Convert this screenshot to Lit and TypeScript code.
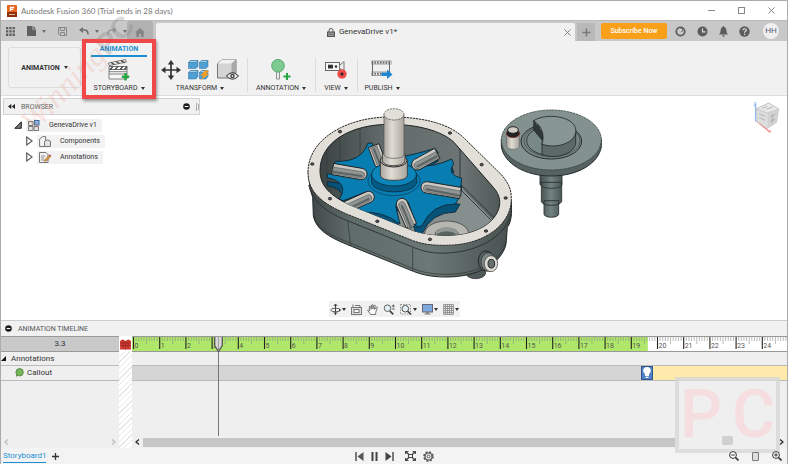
import { LitElement, html, svg, css } from "lit";
import { customElement, property } from "lit/decorators.js";

const STEP = 26.2;
const FRAMES = 25;
const PLAYHEAD = 3.3;
const END = 19.65;

const icon = (w: number, h: number, body: unknown) =>
  html`<svg width=${w} height=${h} viewBox="0 0 ${w} ${h}" aria-hidden="true">${body}</svg>`;

const caret = html`<svg class="caret" width="4" height="3" viewBox="0 0 4 3" aria-hidden="true"><path d="M0 0H4L2 3Z" fill="#333" /></svg>`;

const I = {
  app: icon(10, 12, svg`<rect width="10" height="12" rx="1" fill="#e8641b"/><path d="M0 7h10v5H0z" fill="#8c2f0c"/><path d="M3.4 6V2.5h3.8M3.4 4.3h3" stroke="#fff" stroke-width="1.3" fill="none"/><path d="M2 9.5h6" stroke="#e9b79c" stroke-width="1"/>`),
  min: icon(7, 7, svg`<path d="M0 3.5h7" stroke="#888"/>`),
  max: icon(7, 7, svg`<rect x=".5" y=".5" width="6" height="6" fill="none" stroke="#888"/>`),
  close: icon(7, 7, svg`<path d="M.5 .5l6 6M6.5 .5l-6 6" stroke="#777" stroke-width=".9"/>`),
  grid: icon(9, 9, svg`<path d="M0 0h2.300v2.300H0zM3.300 0h2.300v2.300H3.300zM6.600 0h2.300v2.300H6.600zM0 3.300h2.300v2.300H0zM3.300 3.300h2.300v2.300H3.300zM6.600 3.300h2.300v2.300H6.600zM0 6.600h2.300v2.300H0zM3.300 6.600h2.300v2.300H3.300zM6.600 6.600h2.300v2.300H6.600z" fill="#5c5c5c"/>`),
  file: icon(9, 10, svg`<path d="M0 0h5.500v3.500H9V10H0z" fill="#606060"/><path d="M6.300 0L9 2.700H6.300z" fill="#606060"/>`),
  save: icon(9, 9, svg`<path d="M.5 .5h8v8h-6.500l-1.500-1.500z" fill="none" stroke="#888"/><path d="M2.500 .5v3h4v-3M2.500 8.500v-3h4v3" fill="none" stroke="#888"/>`),
  undo: icon(10, 8, svg`<path d="M1.500 3h4q3.500 0 3.500 4.500" fill="none" stroke="#707070" stroke-width="1.600"/><path d="M0 3L4 0v6z" fill="#707070"/>`),
  redo: icon(10, 8, svg`<path d="M8.500 3h-4q-3.500 0-3.500 4.500" fill="none" stroke="#999" stroke-width="1.400"/><path d="M10 3L6 0v6z" fill="#999"/>`),
  home: icon(10, 9, svg`<path d="M5 0l5 4.500H8.700V9H6V6H4v3H1.300V4.500H0z" fill="#858585"/>`),
  lock: icon(8, 9, svg`<rect x=".5" y="4" width="7" height="4.500" fill="#999" stroke="#555"/><path d="M2 4V2.500a2 2 0 0 1 4 0V4" fill="none" stroke="#555"/><path d="M1 6.200h6" stroke="#555" stroke-width=".6"/>`),
  plusTab: icon(9, 9, svg`<path d="M4.500 .5v8M.5 4.500h8" stroke="#777" stroke-width="1.500"/>`),
  ext: icon(11, 11, svg`<circle cx="5.500" cy="5.500" r="4.200" fill="none" stroke="#5c5c5c" stroke-width="1.800"/><path d="M4 1.500l4 1.500-1.500 3" fill="#ddd" stroke="#5c5c5c"/>`),
  clock: icon(11, 11, svg`<circle cx="5.500" cy="5.500" r="5" fill="#5c5c5c"/><path d="M5.500 2.500v3.300h3" fill="none" stroke="#ddd" stroke-width="1.200"/>`),
  bell: icon(9, 11, svg`<path d="M4.500 0q.8 0 .8 1Q7.500 1.700 7.500 5q0 2 1.500 3.500H0Q1.500 7 1.500 5q0-3.300 2.200-4 0-1 .8-1zM3.200 9.200h2.600q-.3 1.600-1.300 1.600t-1.300-1.600z" fill="#5c5c5c"/>`),
  help: icon(11, 11, svg`<circle cx="5.500" cy="5.500" r="5.200" fill="#5c5c5c"/><path d="M3.800 4.200q.2-1.500 1.800-1.500 1.700 0 1.700 1.400 0 .9-1 1.400-.7.400-.7 1.200M5.600 7.700v1.200" fill="none" stroke="#eee" stroke-width="1.100"/>`),
  storyboard: icon(22, 22, svg`<path d="M1 10.500h18v9.500H1zM1 15h18M1 12.700h18" fill="#f7f7f7" stroke="#666" stroke-width=".8"/><path d="M1 7.500h18v3H1z" fill="#fff" stroke="#555" stroke-width=".8"/><path d="M2 10.500l3-3M7 10.500l3-3M12 10.500l3-3M16.500 10.500l2.500-3" stroke="#444" stroke-width="1.300"/><path d="M1 6.500L.5 4 17.500 .6l.8 2.500z" fill="#fff" stroke="#555" stroke-width=".8"/><path d="M3 3.500l3.500 2M8 2.500l3.500 2M13 1.600l3.500 2" stroke="#444" stroke-width="1.300"/><path d="M17.500 14v7.500M13.800 17.800h7.500" stroke="#27a844" stroke-width="2.400"/>`),
  move: icon(20, 20, svg`<path d="M10 3v14M3 10h14" stroke="#333" stroke-width="1.700"/><path d="M10 0l3.200 4.500H6.800zM10 20l3.200-4.500H6.800zM0 10l4.500-3.200v6.400zM20 10l-4.500-3.200v6.400z" fill="#333"/>`),
  explode: icon(22, 20, svg`<g stroke="#2d6c9d" stroke-width=".5"><path d="M.5 2.500l2-2h7.500v6l-2 2h-7.500zM11.500 2.500l2-2h6.500v6l-2 2h-6.500zM.5 12.500l2-2h7.500v6l-2 2.500h-7.500zM11.500 12.500l2-2h6.500v6l-2 2.500h-6.500z" fill="#4e9fd4"/><path d="M.5 2.500l2-2h7.500l-2 2zM11.500 2.500l2-2h6.500l-2 2zM.5 12.500l2-2h7.500l-2 2zM11.500 12.500l2-2h6.500l-2 2z" fill="#a2d2ee"/></g><path d="M17 10.500h4l-2.500 3.500h2.800L13 20l2.300-4.500h-3z" fill="#f59c1a"/>`),
  visible: icon(22, 21, svg`<path d="M.5 4.500l5-4h13.500v13l-4.500 5.500H.5z" fill="#d4d4d4" stroke="#777"/><path d="M.5 4.500l5-4H19l-4.500 4z" fill="#f2f2f2"/><path d="M14.500 4.500L19 .5v13l-4.500 5.500z" fill="#a8a8a8"/><path d="M9.500 17q6-6.800 12 0-6 6.500-12 0z" fill="#eee" stroke="#444" stroke-width="1.100"/><circle cx="15.500" cy="17" r="2.300" fill="#444"/><circle cx="15.500" cy="17" r=".9" fill="#ddd"/>`),
  annotate: icon(20, 21, svg`<path d="M5.500 12h3v8h-3z" fill="#eee" stroke="#777" stroke-width=".8"/><circle cx="7" cy="6.800" r="6.300" fill="#7dcb91" stroke="#58a86e"/><path d="M16 14v7M12.500 17.500h7" stroke="#27a844" stroke-width="2"/>`),
  view: icon(22, 20, svg`<rect x=".5" y="2.500" width="14" height="8" fill="#f7f7f7" stroke="#666"/><path d="M14.500 5.500l4.500-4v10l-4.500-3.500z" fill="#eee" stroke="#777"/><path d="M3 4.700h5v3.800H3z" fill="#333"/><circle cx="11" cy="6.500" r="1.300" fill="#333"/><circle cx="17" cy="14" r="4.700" fill="#ef4b4b"/><circle cx="17" cy="14" r="1.500" fill="#222"/>`),
  publish: icon(22, 19, svg`<path d="M1.500 1v15M18.500 1v11" stroke="#666"/><path d="M.5 2.500h20" stroke="#666" stroke-width="2.200" stroke-dasharray="1.600 1.200"/><path d="M.5 1h20M.5 4h20M.5 12h19M.5 15.500h10" stroke="#777" stroke-width=".7"/><path d="M.5 13.700h10" stroke="#666" stroke-width="2" stroke-dasharray="1.600 1.200"/><path d="M10.500 12.500h5.500v-3l5.500 5-5.500 4.500v-3h-5.500z" fill="#1f87d2"/>`),
  collapse: icon(7, 5, svg`<path d="M3.300 0v5L0 2.500zM7 0v5L3.700 2.500z" fill="#222"/>`),
  minus: icon(7, 7, svg`<circle cx="3.500" cy="3.500" r="3.300" fill="#1d1d1d"/><path d="M1.700 3.500h3.600" stroke="#fff"/>`),
  grip: icon(3, 8, svg`<path d="M.5 0v8M2.500 1v6" stroke="#999" stroke-width=".8"/>`),
  open: icon(8, 8, svg`<path d="M7.300 .8v6.500H.8z" fill="#777" stroke="#222"/>`),
  shut: icon(7, 10, svg`<path d="M.7 1l5.500 4-5.500 4z" fill="none" stroke="#555" stroke-width="1.100"/>`),
  assembly: icon(12, 11, svg`<path d="M.5 1.500h4.500v4H.5zM.5 6.500h4.500v4H.5zM6 6.500h4.500v4H6z" fill="#e5e5e5" stroke="#777"/><rect x="6.500" y=".5" width="4.500" height="4.500" fill="#85b8e2" stroke="#386e9c"/>`),
  comps: icon(12, 11, svg`<path d="M.6 3L3.600 .6h3v8.500L5.500 10.500H.6z" fill="#f4f4f4" stroke="#777"/><path d="M5.500 6q0-2 3-2t3 2v4.500h-6z" fill="#e2e2e2" stroke="#777"/>`),
  note: icon(12, 11, svg`<path d="M.5 .5h6.500l2 2v8H.5z" fill="#f2f2f2" stroke="#777"/><path d="M2 4h4M2 6h3M2 8h3" stroke="#777" stroke-width=".8"/><path d="M5 8.500l5-5 1.500 1.500-5 4.500z" fill="#e0a54a" stroke="#8b5525" stroke-width=".6"/><path d="M10 3.500l1-1 1 1-.7 1.200z" fill="#b33"/>`),
  orbit: icon(11, 11, svg`<ellipse cx="5.500" cy="6" rx="4.800" ry="1.800" fill="none" stroke="#666"/><path d="M5.500 0v11M3.800 2l1.700-2 1.700 2M3.500 9h4" fill="none" stroke="#444"/><path d="M9 4.500l2 1.500-2 1.500z" fill="#333"/>`),
  look: icon(11, 11, svg`<rect x=".5" y="3.500" width="10" height="7" fill="#ddd" stroke="#777"/><path d="M2 3.500v-3M4 1.500h5v2" fill="none" stroke="#777"/><rect x="3" y="5.500" width="5" height="3" fill="#f8f8f8" stroke="#777"/>`),
  pan: icon(11, 11, svg`<path d="M3.500 10.500Q2 8 .6 6.200q.5-1 2.200.6L2.300 2.500q.7-.9 1.300 0l.7 2.700L4.600 1q.8-1 1.300 0v4l.9-3.700q1-.7 1.300.2L7.600 5.500 9.400 3q1-.2.9.7L8.700 8.300v2.200z" fill="#fff" stroke="#666" stroke-width=".9"/>`),
  zoom: icon(12, 11, svg`<circle cx="4.500" cy="4.200" r="3.300" fill="#e3eef5" stroke="#666"/><path d="M6.800 6.800l3.500 3.500" stroke="#444" stroke-width="1.700"/><path d="M8.800 2h3M10.300 .5v3M8.800 5h3" stroke="#444" stroke-width=".8"/>`),
  fit: icon(12, 11, svg`<rect x=".5" y=".5" width="10" height="9.500" fill="none" stroke="#777" stroke-dasharray="1.500 1.200" stroke-width=".8"/><circle cx="5.300" cy="4.700" r="3.300" fill="#e3eef5" stroke="#555"/><path d="M7.500 7l3.500 3.500" stroke="#444" stroke-width="1.700"/>`),
  display: icon(11, 11, svg`<rect x=".5" y=".5" width="10" height="7.500" fill="#7fa9dc" stroke="#667"/><path d="M4.500 8h2v1.500h2v1h-6v-1h2z" fill="#777"/>`),
  mesh: icon(11, 11, svg`<path d="M.5 .5h10v10H.5zM2.500 .5v10M4.500 .5v10M6.500 .5v10M8.500 .5v10M.5 2.500h10M.5 4.500h10M.5 6.500h10M.5 8.500h10" fill="#e0e0e0" stroke="#8a8a8a" stroke-width=".8"/>`),
  gate: icon(11, 11, svg`<path d="M0 2q2.500-3 5.500 0 3-3 5.500 0v8.500H0z" fill="#d7433a"/><path d="M0 4h11M0 6.500h11M3 1v9M5.500 2v8.500M8 1v9" stroke="#8e1c17" stroke-width=".7"/>`),
  openSmall: icon(5, 5, svg`<path d="M5 0v5H0z" fill="#111"/>`),
  balloon: icon(9, 10, svg`<path d="M1 9.500V5.500h2.500z" fill="#5f9c4a"/><circle cx="4.600" cy="4.300" r="3.700" fill="#79b35c" stroke="#5a8f46"/>`),
  bulb: icon(12, 13, svg`<path d="M6 1q3.800 0 3.800 3.500Q9.800 6.500 8 8v2H4V8Q2.200 6.500 2.200 4.500 2.200 1 6 1z" fill="#fff"/><path d="M4.500 11.300h3" stroke="#fff" stroke-width="1.200"/>`),
  left: icon(5, 6, svg`<path d="M4 .5L1 3l3 2.500" fill="none" stroke="currentColor" stroke-width="1.200"/>`),
  right: icon(5, 6, svg`<path d="M1 .5L4 3 1 5.500" fill="none" stroke="currentColor" stroke-width="1.200"/>`),
  add: icon(7, 7, svg`<path d="M3.500 0v7M0 3.500h7" stroke="#333" stroke-width="1.300"/>`),
  first: icon(9, 9, svg`<path d="M1 0v9" stroke="#444" stroke-width="1.400"/><path d="M8.500 0v9L2.500 4.500z" fill="#555"/>`),
  pause: icon(7, 9, svg`<path d="M1.500 0v9M5.500 0v9" stroke="#444" stroke-width="2"/>`),
  last: icon(9, 9, svg`<path d="M8 0v9" stroke="#444" stroke-width="1.400"/><path d="M.5 0v9l6-4.500z" fill="#444"/>`),
  extent: icon(11, 10, svg`<path d="M.6 3V.6h2.800M7.600 .6h2.800V3M10.400 7v2.400H7.600M3.400 9.400H.6V7" fill="none" stroke="#444" stroke-width="1.100"/><path d="M1 1l9 8M10 1L1 9" stroke="#444" stroke-width="1.300"/><rect x="3.500" y="3.500" width="4" height="3" fill="#f2f2f2" stroke="#444"/>`),
  gear: icon(11, 11, svg`<circle cx="5.500" cy="5.500" r="4.300" fill="none" stroke="#555" stroke-width="2" stroke-dasharray="1.900 1.480"/><circle cx="5.500" cy="5.500" r="3.500" fill="#eee" stroke="#555" stroke-width="1.200"/><circle cx="5.500" cy="5.500" r="1.400" fill="#fff" stroke="#555" stroke-width="1"/>`),
  out: icon(10, 10, svg`<circle cx="4" cy="4" r="3.400" fill="#fff" stroke="#333"/><path d="M2.200 4h3.600" stroke="#333"/><path d="M6.500 6.500l3 3" stroke="#333" stroke-width="1.700"/>`),
  in: icon(10, 10, svg`<circle cx="4" cy="4" r="3.400" fill="#fff" stroke="#333"/><path d="M2.200 4h3.600M4 2.200v3.600" stroke="#333"/><path d="M6.500 6.500l3 3" stroke="#333" stroke-width="1.700"/>`),
};

/* A slot that is flat at its outer end and round at its inner end. */
const slotPath = (ax: number, ay: number, cx: number, cy: number, r: number) => {
  const len = Math.hypot(cx - ax, cy - ay);
  const nx = (-(cy - ay) / len) * r;
  const ny = ((cx - ax) / len) * r;
  return `M${ax - nx} ${ay - ny}L${cx - nx} ${cy - ny}A${r} ${r} 0 0 1 ${cx + nx} ${cy + ny}L${ax + nx} ${ay + ny}Z`;
};

@customElement("fusion-model")
class FusionModel extends LitElement {
  static styles = css`
    :host { display: block; }
    .scene { display: block; width: 100%; height: 100%; }
  `;
  render() {
    const gear = "M203 133L216 132 240 184Q330 172 405 148L415 162 352 200Q400 206 455 180L461 194Q438 226 485 238L482 268 380 258 372 276 480 292 466 315Q395 315 366 380L350 385 325 310Q300 290 287 322L300 375Q250 335 180 340L162 318 220 290 200 278 130 305 118 300Q150 250 82 236L82 224 135 230 190 234 195 216 100 202 106 187Q185 190 203 133Z";
    const inner = "M60 215C60 130 150 76 270 76C350 76 425 95 462 130L580 265C602 290 604 315 592 340C567 390 500 409 440 409C410 409 370 405 340 395L150 318C90 290 60 260 60 215Z";
    const slots = [[98, 210, 184, 225], [221, 140, 240, 190], [412, 163, 352, 196], [481, 282, 380, 265], [334, 380, 306, 315], [134, 326, 206, 294]];
    const holes = [[37, 195], [120, 98], [450, 102], [545, 197], [617, 297], [558, 396], [390, 421], [232, 367], [90, 299]];
    return html`<svg class="scene" viewBox="1 96 786 224" preserveAspectRatio="xMinYMin meet" role="img" aria-label="Geneva drive assembly">
      <defs>
        <linearGradient id="wall"><stop offset="0" stop-color="#3c4343"/><stop offset=".35" stop-color="#626b6a"/><stop offset=".78" stop-color="#6c7574"/><stop offset="1" stop-color="#525a59"/></linearGradient>
        <linearGradient id="body"><stop offset="0" stop-color="#3e4645"/><stop offset=".2" stop-color="#5f6b69"/><stop offset=".6" stop-color="#6b7876"/><stop offset="1" stop-color="#48514f"/></linearGradient>
        <linearGradient id="shaft"><stop offset="0" stop-color="#aaa69f"/><stop offset=".4" stop-color="#e0ddd5"/><stop offset="1" stop-color="#aaa69e"/></linearGradient>
        <linearGradient id="steel"><stop offset="0" stop-color="#444e4d"/><stop offset=".5" stop-color="#718380"/><stop offset="1" stop-color="#4a5554"/></linearGradient>
        <clipPath id="cavity"><path d="M0 0H660V280L600 300 592 340C567 390 500 409 440 409C410 409 370 405 340 395L150 318C90 290 60 260 60 215Z"/></clipPath>
        <clipPath id="pit"><path d=${inner}/></clipPath>
      </defs>
      <g transform="translate(300 99) scale(.33333)" stroke-linejoin="round">
        <ellipse cx="527" cy="522" rx="30" ry="17" fill="#4f5958" stroke="#222" stroke-width="2"/>
        <path d="M25 220L30 268 38 295 40 350C48 395 95 418 150 440L340 517C372 530 405 534 440 534C530 534 605 495 618 435L622 385C634 370 636 345 634 305Z" fill="url(#body)" stroke="#202626" stroke-width="3"/>
        <path d="M26 258C38 310 85 342 140 364L340 445C380 462 420 466 465 460C550 450 618 405 634 345" fill="none" stroke="#252b2b" stroke-width="2.500"/>
        <path d="M40 343C48 390 95 410 150 432L340 509C372 522 405 526 440 526C530 526 605 487 618 427M143 366L152 440M338 446V516" fill="none" stroke="#2c3433" stroke-width="2"/>
        <path d="M24 220C24 120 140 54 270 54C370 54 446 74 490 115L602 225C632 258 636 280 633 314C626 375 560 431 460 438C420 440 378 440 336 424L140 345C70 315 24 282 24 220Z" fill="#e2dfd9" stroke="#262626" stroke-width="3" stroke-dasharray="7 2"/>
        <path d=${inner} fill="url(#wall)" stroke="#1e2323" stroke-width="3"/>
        <g clip-path="url(#pit)">
          <path d="M100 340L230 225 450 232 582 366 560 420H300Z" fill="#858f8d"/>
          <path d="M480 145V262M450 225L585 358M446 236L578 368" fill="none" stroke="#262c2c" stroke-width="2.500"/>
          <path d="M80 125v120M120 100v110M180 85v90" stroke="#323939" stroke-width="5" opacity=".4"/>
          <ellipse cx="440" cy="404" rx="66" ry="38" fill="#b7b6b1" stroke="#333" stroke-width="2"/>
          <ellipse cx="440" cy="406" rx="35" ry="19" fill="#596362" stroke="#333" stroke-width="2"/>
          <path d="M407 398q32-26 66 0v9q-33-20-66 0z" fill="#929995"/>
        </g>
        <g clip-path="url(#cavity)">
          <path d=${gear} transform="translate(0 24)" fill="#075279" stroke="#0b2c3d" stroke-width="3"/>
          <path d=${gear} fill="#087db1" stroke="#102e3d" stroke-width="3"/>
          ${slots.map(([a, b, c, d]) => svg`<path d=${slotPath(a, b, c, d, 17)} fill="#cbc9c3" stroke="#222" stroke-width="3"/><path d=${slotPath(a, b + 4, c, d + 3, 10)} fill="#8f9592" stroke="#444" stroke-width="1.500"/><path d=${slotPath(a, b + 8, c, d + 6, 3)} fill="#5d6463"/>`)}
        </g>
        <ellipse cx="282" cy="246" rx="78" ry="44" fill="#087db1" stroke="#0b3b53" stroke-width="2"/>
        <path d="M215 226v24c5 38 130 38 135 0v-24z" fill="#065b86" stroke="#0b2c3d" stroke-width="2.500"/>
        <ellipse cx="282" cy="226" rx="67" ry="35" fill="#0c85bb" stroke="#0b2c3d" stroke-width="2.500"/>
        <path d="M241 184v46q4 14 41 14t40-14v-46z" fill="url(#shaft)" stroke="#333" stroke-width="2.500"/>
        <ellipse cx="281" cy="184" rx="40" ry="20" fill="#c8c5bd" stroke="#222" stroke-width="3"/>
        <path d="M247 164v22q5 14 34 14t34-14v-22z" fill="url(#shaft)" stroke="#333" stroke-width="2.500"/>
        <path d="M252 46v122q5 10 30 10t30-10V46z" fill="url(#shaft)" stroke="#555" stroke-width="2"/>
        <ellipse cx="282" cy="46" rx="30" ry="17" fill="#e2dfd8" stroke="#444" stroke-width="2" stroke-dasharray="7 2"/>
        ${holes.map(([x, y]) => svg`<ellipse cx=${x} cy=${y} rx="5" ry="4" fill="#555" stroke="#111" stroke-width="2"/>`)}
        <ellipse cx="558" cy="486" rx="23" ry="30" fill="#596462" stroke="#222" stroke-width="3"/>
        <ellipse cx="565" cy="489" rx="22" ry="28" fill="#7b8583" stroke="#222" stroke-width="2"/>
        <ellipse cx="573" cy="494" rx="20" ry="24" fill="#dedbd4" stroke="#333" stroke-width="2"/>
        <ellipse cx="574" cy="494" rx="10" ry="13" fill="#66716f" stroke="#222" stroke-width="3"/>
      </g>
      <g transform="translate(490 94) scale(.33333)" stroke-linejoin="round">
        <path d="M162 320v42q5 8 22 8t22-8v-42zM154 265v58q5 11 30 11t31-11v-58zM150 225v46q6 12 34 12t32-12v-46z" fill="url(#steel)" stroke="#252d2c" stroke-width="2.500"/>
        <path d="M34 136v22c8 50 70 88 150 88s142-38 150-88v-22z" fill="#556260" stroke="#252d2c" stroke-width="3"/>
        <ellipse cx="184" cy="138" rx="150" ry="90" fill="#84928f" stroke="#333e3c" stroke-width="2.500" stroke-dasharray="7 2"/>
        <ellipse cx="184" cy="142" rx="91" ry="53" fill="#768583" stroke="#222b2a" stroke-width="3"/>
        <ellipse cx="186" cy="140" rx="84" ry="48" fill="none" stroke="#354240" stroke-width="2"/>
        <ellipse cx="180" cy="140" rx="70" ry="44" fill="#798987" stroke="#222b2a" stroke-width="2.500"/>
        <path d="M156 143V182C200 198 250 178 257 150V110z" fill="#5c6967" stroke="#222b2a" stroke-width="2.500"/>
        <path d="M131 80v28l29 35v-23z" fill="#303837" stroke="#1e2524" stroke-width="2"/>
        <path d="M131 80C160 62 208 63 238 80C268 98 262 132 230 147C207 158 180 158 156 151C165 122 155 96 131 80Z" fill="#879693" stroke="#222b2a" stroke-width="2.500"/>
        <path d="M50 118v41q4 7 19 7t19-7v-41z" fill="url(#shaft)" stroke="#666" stroke-width="2"/>
        <ellipse cx="69" cy="118" rx="20" ry="13" fill="#222" stroke="#8e3a2c" stroke-width="2"/>
        <ellipse cx="69" cy="108" rx="16" ry="10" fill="#cfccc6" stroke="#222" stroke-width="3"/>
      </g>
      <g transform="translate(490 94) scale(.33333)">
        <path d="M797 28v55" stroke="#8db8f0" stroke-width="4"/><path d="M800 82l40 32" stroke="#f48f86" stroke-width="4"/>
        <path d="M799 45L836 27 866 45 860 85 832 103 802 84Z" fill="#dedede" stroke="#bbb" stroke-width="2"/>
        <path d="M799 45L833 57 866 45 836 27Z" fill="#e9e9e9" stroke="#bbb" stroke-width="2"/><path d="M833 57V103L860 85 866 45Z" fill="#d2d2d2"/>
        <path d="M817 43l15-6M830 46l18-7M807 60l19 7M808 71l18 8M842 67l14-6M841 83l14-8M847 62v24" stroke="#aaa" stroke-width="2.500"/>
        <path d="M791 26h7l-7 9h7" fill="none" stroke="#8db8f0" stroke-width="2"/><path d="M836 108l7 9M843 108l-7 9" fill="none" stroke="#f48f86" stroke-width="2"/>
      </g>
    </svg>`;
  }
}

@customElement("time-ruler")
class TimeRuler extends LitElement {
  @property({ type: Number }) step = STEP;
  static styles = css`
    :host { display: block; overflow: hidden; background: #fff; }
    .scale { display: block; width: 100%; height: 16px; }
    .num { font: 7px Roboto, sans-serif; fill: #555; }
  `;
  render() {
    const ticks = [];
    for (let i = 0; i < FRAMES * 10; i++) {
      const x = 1.5 + (i * this.step) / 10;
      const h = i % 10 === 0 ? 12 : i % 5 === 0 ? 7 : 4;
      ticks.push(svg`<path d="M${x} 0v${h}" stroke=${i % 10 ? "#8a8f86" : "#222"} stroke-width=${i % 10 ? 0.6 : 1.1} />`);
      if (i % 10 === 0) ticks.push(svg`<text class="num" x=${x + 1} y="11">${i / 10}</text>`);
    }
    return html`<svg class="scale"><rect width=${END * this.step + 1} height="16" fill="#afe76b"/>${ticks}</svg>`;
  }
}

@customElement("app-root")
class AppRoot extends LitElement {
  static styles = css`
    * { box-sizing: border-box; }
    :host {
      display: flex; flex-direction: column; position: relative; min-height: 100vh; overflow: hidden; box-sizing: border-box;
      border: 1px solid #ababab; border-bottom: 0; background: #fff; color: #333; font: 7px/12px Roboto, sans-serif;
    }
    svg { display: block; flex: none; }
    button { display: inline-flex; align-items: center; justify-content: center; margin: 0; padding: 0; border: 0; background: none; color: inherit; font: inherit; white-space: nowrap; }
    a { color: inherit; text-decoration: none; }
    .titlebar { display: flex; align-items: center; height: 19px; padding: 0 12px 0 6px; gap: 4px; color: #777; font: 8px/12px Lato, sans-serif; }
    .window { display: flex; gap: 23px; margin-left: auto; }
    .tabs { display: flex; align-items: center; height: 21px; background: #c8c8c8; border-top: 1px solid #bbb; }
    .quick { display: flex; align-items: center; gap: 12px; width: 126px; padding-left: 5px; }
    .pair { gap: 6px; }
    .near { margin-left: -4px; }
    .quick .caret { opacity: .6; }
    .homeTab { width: 26px; height: 20px; background: #b1b1b1; border-radius: 2px 2px 0 0; padding-top: 3px; }
    .doc { display: flex; align-items: center; align-self: flex-end; flex: 1; height: 18px; margin-left: 3px; padding: 0 4px; background: #f1f1f1; border-radius: 2px 2px 0 0; }
    .docName { display: flex; flex: 1; align-items: center; justify-content: center; gap: 4px; font-size: 8px; }
    .newTab { width: 18px; height: 18px; margin: 0 6px 0 2px; background: #b9b9b9; align-self: flex-end; }
    .subscribe { width: 66px; height: 16px; border-radius: 2px; background: #f9a01b; color: #fff; font-weight: 500; }
    .account { display: flex; align-items: center; gap: 11px; padding: 0 8px; }
    .avatar { width: 16px; height: 16px; margin-left: 2px; border-radius: 50%; background: #efefef; color: #557; font: 8px/16px "Liberation Sans", sans-serif; }
    .toolbar { display: flex; height: 55px; padding-left: 7px; background: #f1f1f1; border-bottom: 1px solid #ddd; }
    .workspace { width: 73px; height: 41px; margin: 6px 4px 0 0; gap: 4px; border: 1px solid #ddd; border-radius: 3px; font-weight: 700; }
    .group { position: relative; display: flex; flex-direction: column; align-items: center; padding-top: 16px; }
    .tools { display: flex; align-items: center; gap: 7px; height: 25px; }
    .label { gap: 3px; height: 12px; }
    .group + .group::before { content: ""; position: absolute; left: 0; top: 17px; width: 1px; height: 34px; background: #ddd; }
    .story { width: 68px; }
    .trans { width: 94px; }
    .group.trans::before { content: none; }
    .annot { width: 68px; }
    .viewg { width: 42px; }
    .pub { width: 50px; }
    .activeTab { position: absolute; top: 0; left: 6px; right: 6px; height: 16px; border-bottom: 2px solid #1d8fd0; color: #1d8fd0; font-weight: 700; text-align: center; line-height: 16px; }
    .frame { position: absolute; z-index: 3; inset: -2px -3px -4px -3px; border: 4px solid #f04848; box-shadow: 1px 2px 3px #0006; pointer-events: none; }
    .canvas { position: relative; flex: 1; min-height: 224px; }
    .model { position: absolute; inset: 0; }
    .browser { position: relative; width: 199px; padding: 2px 0 0 2px; }
    .panelHead { display: flex; align-items: center; gap: 6px; height: 17px; padding: 0 0 0 4px; border: 1px solid #d2d2d2; background: #f1f1f1; color: #666; }
    .spacer { margin-left: auto; }
    .tree { list-style: none; margin: 2px 0 0; padding: 0 0 0 11px; }
    .tree .tree { margin: 0; padding-left: 12px; }
    .node { display: flex; align-items: center; gap: 4px; height: 16px; }
    .chip { display: flex; align-items: center; gap: 9px; height: 13px; padding: 0 5px 0 2px; background: #f2f2f2; }
    .nav { position: absolute; left: 0; right: 0; bottom: 3px; width: max-content; margin: auto; display: flex; align-items: center; gap: 5px; height: 16px; padding: 0 1px; background: #f1f1f1; }
    .nav button { gap: 1px; }
    .timelineHead { display: flex; align-items: center; gap: 6px; height: 16px; padding-left: 4px; background: #f1f1f1; border-top: 1px solid #ccc; color: #555; }
    .timeline { display: grid; grid-template-columns: 118px 13px 1fr; grid-template-rows: 16px 14px 15px 55px 12px; background: #efefef; font-size: 8px; }
    .time { background: #c9c9c9; border: solid #999; border-width: 1px 0; text-align: center; line-height: 14px; }
    .ruler { border: solid #999; border-width: 1px 0; }
    .gate { display: flex; align-items: center; justify-content: center; background: #fff; }
    .row { display: flex; align-items: center; gap: 5px; border-bottom: 1px solid #bbb; }
    .child { gap: 3px; padding-left: 14px; }
    .hatch { grid-column: 2; grid-row: 2 / 6; background: repeating-linear-gradient(135deg, #fff 0 3px, #e6e6e6 3px 4px); }
    .c1 { grid-column: 1; }
    .lanes { position: relative; grid-column: 3; grid-row: 1 / 5; display: grid; grid-template-rows: 16px 13px 16px 55px; overflow: hidden; }
    .track { display: flex; grid-row: 3; background: #d5d5d5; border: solid #bbb; border-width: 1px 0; }
    .bulb { width: 12px; background: #4f7fc4; outline: 1px solid #31568f; outline-offset: -1px; }
    .hold { flex: 1; background: #ffe9ab; }
    .playhead { position: absolute; top: 1px; bottom: 0; width: 9px; margin-left: -4px; }
    .needle { width: 1px; height: 100%; margin: 0 auto; background: #777; }
    .handle { position: absolute; top: 0; left: 0; }
    .scroll { display: flex; align-items: center; justify-content: space-between; padding: 0 3px; color: #bbb; }
    .main { color: #222; gap: 3px; }
    .thumb { flex: 0 0 82%; height: 9px; background: #c6c6c6; margin-right: auto; }
    .footer { position: relative; z-index: 5; display: grid; grid-template-columns: 1fr auto 1fr; align-items: center; height: 16px; font-size: 8px; }
    .base { background: #f3f3f3; }
    .sheets { display: flex; align-items: center; gap: 6px; padding-left: 2px; }
    .sheet { border-bottom: 1px solid #1d8fd0; color: #1d8fd0; }
    .play { display: flex; align-items: center; gap: 7px; }
    .extent { margin-left: 4px; }
    .zoomer { display: flex; align-items: center; justify-content: flex-end; gap: 13px; padding-right: 5px; }
    .knob { width: 7px; height: 9px; border: 1px solid #777; background: #ddd; border-radius: 1px; }
    .badge { position: absolute; z-index: 4; right: 7px; bottom: 11px; display: flex; align-items: center; justify-content: center; gap: 10px; width: 105px; height: 76px; border: 4px solid #a0a4a440; background: #efefefcc; color: #f5dde0; font: 500 66px/66px Roboto, sans-serif; pointer-events: none; }
    .dot { position: absolute; left: 43px; bottom: 4px; width: 11px; height: 9px; border-radius: 2px; background: #d0d0d0; }
    .mark { position: absolute; z-index: 2; top: 109px; left: 25px; display: flex; align-items: baseline; transform: rotate(-46deg); transform-origin: 0 50%; pointer-events: none; color: #f06b552e; font: italic 32px/32px "Liberation Serif", serif; white-space: nowrap; }
    .markBold { color: #77777740; font: 700 30px/32px "Liberation Sans", sans-serif; }
  `;

  render() {
    const b = (label: string, pic: unknown, cls = "") => html`<button class=${cls} aria-label=${label}>${pic}</button>`;
    const group = (cls: string, label: string, tools: unknown, extra: unknown = "") =>
      html`<div class="group ${cls}">${extra}<div class="tools">${tools}</div><button class="label">${label}${caret}</button></div>`;
    return html`
      <header class="titlebar">${I.app}<span>Autodesk Fusion 360 (Trial ends in 28 days)</span>
        <div class="window">${b("Minimize", I.min)}${b("Maximize", I.max)}${b("Close", I.close)}</div></header>
      <nav class="tabs">
        <div class="quick">${b("Data panel", I.grid)}${b("File", html`${I.file}${caret}`, "pair")}${b("Save", I.save)}${b("Undo", html`${I.undo}${caret}`, "pair")}${b("Redo", html`${I.redo}${caret}`, "pair near")}</div>
        ${b("Home", I.home, "homeTab")}
        <div class="doc"><span class="docName">${I.lock}GenevaDrive v1*</span>${b("Close document", I.close)}</div>
        ${b("New tab", I.plusTab, "newTab")}
        <button class="subscribe">Subscribe Now</button>
        <div class="account">${b("Extensions", I.ext)}${b("Job status", I.clock)}${b("Notifications", I.bell)}${b("Help", I.help)}<button class="avatar">HH</button></div>
      </nav>
      <section class="toolbar">
        <button class="workspace">ANIMATION${caret}</button>
        ${group("story", "STORYBOARD", b("New storyboard", I.storyboard), html`<a class="activeTab" href="#animation">ANIMATION</a><div class="frame"></div>`)}
        ${group("trans", "TRANSFORM", html`${b("Move", I.move)}${b("Explode", I.explode)}${b("Show or hide", I.visible)}`)}
        ${group("annot", "ANNOTATION", b("Create callout", I.annotate))}
        ${group("viewg", "VIEW", b("View", I.view))}
        ${group("pub", "PUBLISH", b("Publish video", I.publish))}
      </section>
      <main class="canvas">
        <fusion-model class="model"></fusion-model>
        <aside class="browser">
          <div class="panelHead">${b("Collapse", I.collapse)}<span>BROWSER</span>${b("Hide", I.minus, "spacer")}${I.grip}</div>
          <ul class="tree">
            <li><div class="node">${b("Collapse GenevaDrive", I.open)}<span class="chip">${I.assembly}GenevaDrive v1</span></div>
              <ul class="tree">
                <li class="node">${b("Expand Components", I.shut)}<span class="chip">${I.comps}Components</span></li>
                <li class="node">${b("Expand Annotations", I.shut)}<span class="chip">${I.note}Annotations</span></li>
              </ul></li>
          </ul>
        </aside>
        <div class="nav">${b("Orbit", html`${I.orbit}${caret}`)}${b("Look at", I.look)}${b("Pan", I.pan)}${b("Zoom", I.zoom)}${b("Fit", html`${I.fit}${caret}`)}${b("Display", html`${I.display}${caret}`)}${b("Grid", html`${I.mesh}${caret}`)}</div>
      </main>
      <div class="timelineHead">${I.minus}<span>ANIMATION TIMELINE</span></div>
      <section class="timeline">
        <div class="time c1">${PLAYHEAD}</div>
        <div class="gate">${I.gate}</div>
        <div class="row c1">${I.openSmall}<span>Annotations</span></div>
        <div class="row child c1">${I.balloon}<span>Callout</span></div>
        <div class="hatch"></div>
        <div class="lanes">
          <time-ruler class="ruler" .step=${STEP}></time-ruler>
          <div class="track"><div style="width:${Math.round(19.43 * STEP)}px"></div><div class="bulb">${I.bulb}</div><div class="hold"></div></div>
          <div class="playhead" style="left:${PLAYHEAD * STEP}px"><div class="needle"></div>
            <svg class="handle" width="9" height="15" viewBox="0 0 9 15"><path d="M.7 0v8.500L4.500 14.500 8.300 8.500V0" fill="#d8d8d8" stroke="#555" stroke-width="1.300"/><path d="M4.500 0v14" stroke="#888" stroke-width=".7"/></svg></div>
        </div>
        <div class="scroll c1" style="grid-row:5">${I.left}${I.right}</div>
        <div class="scroll main" style="grid-row:5;grid-column:3">${I.left}<div class="thumb"></div>${I.right}</div>
      </section>
      <div class="base"><footer class="footer">
        <div class="sheets"><a class="sheet" href="#storyboard1">Storyboard1</a>${b("Add storyboard", I.add)}</div>
        <div class="play">${b("First", I.first)}${b("Pause", I.pause)}${b("Last", I.last)}${b("Extents", I.extent, "extent")}${b("Settings", I.gear)}</div>
        <div class="zoomer">${b("Zoom out", I.out)}<span class="knob"></span>${b("Zoom in", I.in)}</div>
      </footer></div>
      <div class="badge"><span>P</span><span>C</span><i class="dot"></i></div>
      <div class="mark"><span>Winning</span><span class="markBold">PC</span></div>`;
  }
}
